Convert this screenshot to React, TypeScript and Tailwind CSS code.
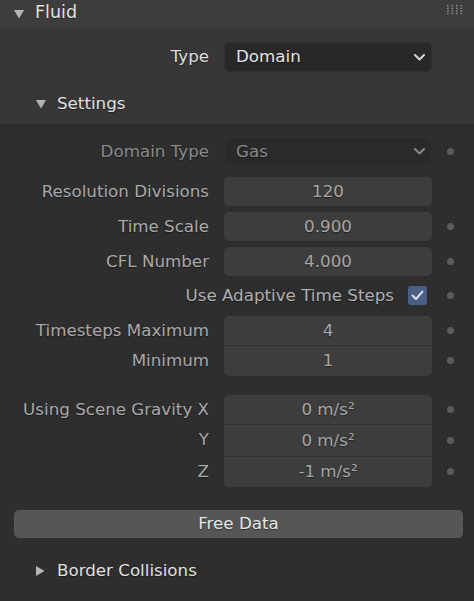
import React from "react";

const font = { fontFamily: '"DejaVu Sans", "Liberation Sans", sans-serif' };

function TriDown({ className = "" }: { className?: string }) {
  return (
    <svg width="10" height="9" viewBox="0 0 10 9" className={className}>
      <polygon points="0,0 10,0 5,8.5" fill="#b4b4b4" />
    </svg>
  );
}

function TriRight({ className = "" }: { className?: string }) {
  return (
    <svg width="9" height="10" viewBox="0 0 9 10" className={className}>
      <polygon points="0,0 8.5,5 0,10" fill="#b4b4b4" />
    </svg>
  );
}

function Chevron({ color = "#d6d6d6" }: { color?: string }) {
  return (
    <svg width="11" height="7" viewBox="0 0 11 7">
      <polyline points="1,1 5.5,5.5 10,1" fill="none" stroke={color} strokeWidth="2" strokeLinecap="round" strokeLinejoin="round" />
    </svg>
  );
}

function Handle() {
  const dots = [];
  for (let r = 0; r < 4; r++)
    for (let c = 0; c < 4; c++)
      dots.push(<rect key={`${r}-${c}`} x={c * 4.5} y={r * 2.6} width="1.6" height="1.4" fill="#8c8c8c" />);
  return (
    <svg width="16" height="10" viewBox="0 0 16 10">
      {dots}
    </svg>
  );
}

function Dot({ show = true }: { show?: boolean }) {
  return (
    <div className="w-[36px] flex justify-center">
      {show && <div className="w-[7px] h-[7px] rounded-full bg-[#5c5c5c]" />}
    </div>
  );
}

function Label({ text, dim = false }: { text: string; dim?: boolean }) {
  return (
    <div className={`w-[209px] text-right whitespace-nowrap ${dim ? "text-[#8a8a8a]" : "text-[#a9a9a9]"}`}>
      {text}
    </div>
  );
}

function NumRow({ label, value, dot = true, mt }: { label: string; value: string; dot?: boolean; mt: string }) {
  return (
    <div className={`flex items-center h-[29px] ${mt}`}>
      <Label text={label} />
      <div className="ml-[15px] w-[208px] h-full rounded-[5px] bg-[#3d3d3d] flex items-center justify-center text-[#a6a6a6]">
        {value}
      </div>
      <Dot show={dot} />
    </div>
  );
}

function Column({ rows, mt }: { rows: { label: string; value: string; h: string }[]; mt: string }) {
  return (
    <div className={`flex ${mt}`}>
      <div className="flex flex-col">
        {rows.map((r) => (
          <div key={r.label + r.value} className={`flex items-center ${r.h}`}>
            <Label text={r.label} />
          </div>
        ))}
      </div>
      <div className="ml-[15px] w-[208px] rounded-[5px] overflow-hidden flex flex-col bg-[#3d3d3d]">
        {rows.map((r, i) => (
          <div
            key={r.label + r.value}
            className={`flex items-center justify-center text-[#a6a6a6] ${r.h} ${i > 0 ? "border-t border-[#333333]" : ""}`}
          >
            {r.value}
          </div>
        ))}
      </div>
      <div className="flex flex-col">
        {rows.map((r) => (
          <div key={r.label + r.value} className={`flex items-center ${r.h}`}>
            <Dot />
          </div>
        ))}
      </div>
    </div>
  );
}

export default function App() {
  return (
    <div
      style={font}
      className="w-[474px] h-[601px] overflow-hidden bg-[#2e2e2e] text-[16.7px] [text-shadow:0_1px_1px_rgba(0,0,0,0.45)]"
    >
      {/* panel header */}
      <div className="h-[28px] bg-[#3d3d3d] flex items-center pl-[14px] pr-[11px]">
        <TriDown />
        <span className="ml-[11px] text-[17.5px] text-[#e2e2e2] -mt-[3px]">Fluid</span>
        <div className="ml-auto -mt-[8px]">
          <Handle />
        </div>
      </div>

      {/* panel body */}
      <div className="bg-[#373737] pt-[14px]">
        <div className="flex items-center h-[30px]">
          <div className="w-[209px] text-right text-[#dedede]">Type</div>
          <div className="ml-[15px] w-[208px] h-full rounded-[5px] bg-[#282828] border border-[#303030] flex items-center pl-[11px] pr-[6px] text-[#e4e4e4]">
            <span>Domain</span>
            <div className="ml-auto">
              <Chevron />
            </div>
          </div>
        </div>
        <div className="h-[52px] flex items-center pl-[36px] pt-[12px]">
          <TriDown />
          <span className="ml-[11px] text-[#e0e0e0]">Settings</span>
        </div>
      </div>

      {/* settings subpanel */}
      <div className="bg-[#2e2e2e] pt-[13px]">
        <div className="flex items-center h-[29px]">
          <Label text="Domain Type" dim />
          <div className="ml-[15px] w-[208px] h-full rounded-[5px] bg-[#2a2a2a] border border-[#303030] flex items-center pl-[11px] pr-[6px] text-[#8a8a8a]">
            <span>Gas</span>
            <div className="ml-auto">
              <Chevron color="#8a8a8a" />
            </div>
          </div>
          <Dot />
        </div>

        <NumRow label="Resolution Divisions" value="120" dot={false} mt="mt-[11px]" />
        <NumRow label="Time Scale" value="0.900" mt="mt-[6px]" />
        <NumRow label="CFL Number" value="4.000" mt="mt-[6px]" />

        <div className="flex items-center h-[29px] mt-[5px]">
          <div className="w-[394px] text-right text-[#b0b0b0]">Use Adaptive Time Steps</div>
          <div className="ml-[14px] w-[19px] h-[19px] rounded-[3px] bg-[#4a5f85] flex items-center justify-center">
            <svg width="13" height="11" viewBox="0 0 13 11">
              <polyline points="1.5,5.5 5,9 11.5,1.5" fill="none" stroke="#d8deea" strokeWidth="2" strokeLinecap="round" strokeLinejoin="round" />
            </svg>
          </div>
          <div className="ml-[5px]">
            <Dot />
          </div>
        </div>

        <Column
          mt="mt-[6px]"
          rows={[
            { label: "Timesteps Maximum", value: "4", h: "h-[29px]" },
            { label: "Minimum", value: "1", h: "h-[31px]" },
          ]}
        />

        <Column
          mt="mt-[19px]"
          rows={[
            { label: "Using Scene Gravity X", value: "0 m/s²", h: "h-[29px]" },
            { label: "Y", value: "0 m/s²", h: "h-[32px]" },
            { label: "Z", value: "-1 m/s²", h: "h-[31px]" },
          ]}
        />

        <div className="mt-[23px] ml-[14px] mr-[11px] h-[28px] rounded-[5px] bg-[#565656] flex items-center justify-center text-[#e6e6e6]">
          Free Data
        </div>

        <div className="h-[66px] flex items-center pl-[36px]">
          <TriRight />
          <span className="ml-[12px] text-[#e0e0e0]">Border Collisions</span>
        </div>
      </div>
    </div>
  );
}
